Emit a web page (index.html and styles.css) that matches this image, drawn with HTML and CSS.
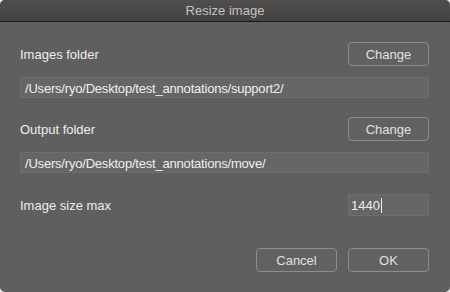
FILE: index.html
```html
<!DOCTYPE html>
<html>
<head>
  <meta charset="UTF-8">
  <title>Resize image</title>
  <link rel="stylesheet" href="styles.css">
</head>
<body>
  <div class="window">
    <div class="titlebar">Resize image</div>

    <div class="content">
      <div class="row">
        <span class="label">Images folder</span>
        <button class="btn">Change</button>
      </div>
      <div class="path-field">/Users/ryo/Desktop/test_annotations/support2/</div>

      <div class="row row-second">
        <span class="label">Output folder</span>
        <button class="btn">Change</button>
      </div>
      <div class="path-field">/Users/ryo/Desktop/test_annotations/move/</div>

      <div class="row row-size">
        <span class="label">Image size max</span>
        <div class="size-field">1440<span class="caret"></span></div>
      </div>

      <div class="actions">
        <button class="btn">Cancel</button>
        <button class="btn">OK</button>
      </div>
    </div>
  </div>
</body>
</html>
```

FILE: styles.css
```css
:root {
  --window-bg: #5f5f5f;
  --title-top: #504e4c;
  --title-bottom: #444240;
  --title-text: #c2c2c2;
  --label-text: #eeeeee;
  --button-text: #e0e0e0;
  --button-border: #8c8c8c;
  --field-bg: #666666;
  --field-border: #6d6d6d;
}

body {
  margin: 0;
  background: #f2f2f2;
  font-family: "Liberation Sans", Arial, sans-serif;
  font-size: 13px;
}

.window {
  width: 450px;
  height: 292px;
  background-color: var(--window-bg);
  border-radius: 5px;
  overflow: hidden;
}

.titlebar {
  height: 21px;
  line-height: 21px;
  text-align: center;
  color: var(--title-text);
  background: linear-gradient(var(--title-top), var(--title-bottom));
  border-bottom: 1px solid #161616;
}

.content {
  padding: 20px 21px 0 20px;
}

.row {
  display: flex;
  justify-content: space-between;
  align-items: center;
  height: 24px;
}

.row-second {
  margin-top: 19px;
}

.row-size {
  margin-top: 21px;
  height: 22px;
}

.label {
  color: var(--label-text);
}

.btn {
  width: 81px;
  height: 24px;
  padding: 0;
  font-family: inherit;
  font-size: 13px;
  color: var(--button-text);
  background-color: #616161;
  border: 1px solid var(--button-border);
  border-radius: 4px;
}

.path-field {
  margin-top: 11px;
  height: 21px;
  line-height: 21px;
  padding-left: 4px;
  letter-spacing: -0.2px;
  color: var(--label-text);
  background-color: var(--field-bg);
  border: 1px solid var(--field-border);
  box-sizing: border-box;
}

.size-field {
  width: 81px;
  height: 22px;
  line-height: 22px;
  padding-left: 2px;
  box-sizing: border-box;
  color: var(--label-text);
  background-color: var(--field-bg);
  border: 1px solid var(--field-border);
}

.caret {
  display: inline-block;
  width: 1px;
  height: 15px;
  margin-left: 1px;
  vertical-align: -3px;
  background-color: #f0f0f0;
}

.actions {
  display: flex;
  justify-content: flex-end;
  gap: 11px;
  margin-top: 32px;
}
```
